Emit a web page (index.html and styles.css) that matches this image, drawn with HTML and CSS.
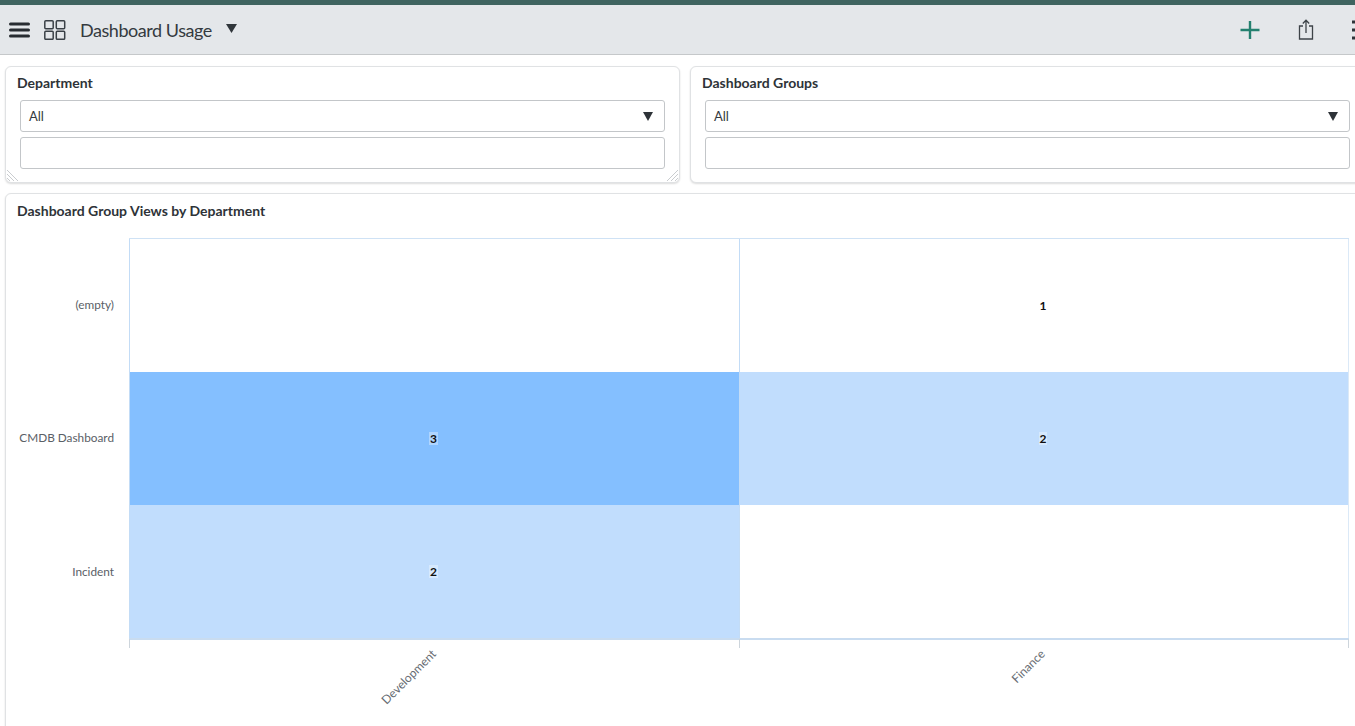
FILE: index.html
```html
<!DOCTYPE html>
<html lang="en">
<head>
<meta charset="utf-8">
<title>Dashboard Usage</title>
<link rel="stylesheet" href="styles.css">
</head>
<body>
<div class="page">
  <header class="topbar">
    <svg class="icon-menu" width="22" height="16" viewBox="0 0 22 16"><path d="M1.500 2h18M1.500 8h18M1.500 14h18" fill="none" stroke="#272c31" stroke-width="3" stroke-linecap="round"/></svg>
    <svg class="icon-grid" width="22" height="20" viewBox="0 0 22 20"><g fill="none" stroke="#3a4147" stroke-width="1.500"><rect x="0.800" y="0.800" width="8.400" height="8" rx="1"/><rect x="12.300" y="0.800" width="8.400" height="8" rx="1"/><rect x="0.800" y="11.300" width="8.400" height="8" rx="1"/><rect x="12.300" y="11.300" width="8.400" height="8" rx="1"/></g></svg>
    <h1 class="title">Dashboard Usage</h1>
    <svg class="icon-caret" width="11" height="9" viewBox="0 0 11 9"><path d="M0 0h11L5.500 9z" fill="#30363b"/></svg>
    <span class="spacer"></span>
    <svg class="icon-plus" width="20" height="20" viewBox="0 0 20 20"><path d="M10 1v18M0.500 10h19" fill="none" stroke="#23806f" stroke-width="2.400"/></svg>
    <svg class="icon-share" width="16" height="21" viewBox="0 0 16 21"><path d="M5 7H1.500v13h13V7H11M8 14V1.500M4.800 4.500 8 1.200l3.200 3.300" fill="none" stroke="#3d4348" stroke-width="1.300"/></svg>
    <svg class="icon-more" width="6" height="20" viewBox="0 0 6 20"><path d="M1 2h8M1 10h8M1 18h8" fill="none" stroke="#2e3338" stroke-width="3"/></svg>
  </header>

  <section class="filters">
    <div class="card filter">
      <h2 class="card-title">Department</h2>
      <div class="select"><span>All</span><svg width="10" height="9" viewBox="0 0 10 9"><path d="M0 0h10L5 9z" fill="#2e3338"/></svg></div>
      <div class="textbox"></div>
      <svg class="grip grip-left" width="12" height="12" viewBox="0 0 12 12"><path d="M0 1l11 11M0 5l7 7M0 9l3 3" stroke="#c9cccf" fill="none"/></svg>
      <svg class="grip grip-right" width="12" height="12" viewBox="0 0 12 12"><path d="M12 1 1 12M12 5l-7 7M12 9l-3 3" stroke="#c9cccf" fill="none"/></svg>
    </div>
    <div class="card filter">
      <h2 class="card-title">Dashboard Groups</h2>
      <div class="select"><span>All</span><svg width="10" height="9" viewBox="0 0 10 9"><path d="M0 0h10L5 9z" fill="#2e3338"/></svg></div>
      <div class="textbox"></div>
    </div>
  </section>

  <section class="card chart-card">
    <h2 class="card-title">Dashboard Group Views by Department</h2>
    <div class="chart">
      <div class="y-labels">
        <span>(empty)</span>
        <span>CMDB Dashboard</span>
        <span>Incident</span>
      </div>
      <div class="plot-wrap">
        <div class="plot">
          <div class="cell"></div>
          <div class="cell"><b>1</b></div>
          <div class="cell dark"><b>3</b></div>
          <div class="cell light"><b>2</b></div>
          <div class="cell light"><b>2</b></div>
          <div class="cell"></div>
        </div>
        <div class="x-axis">
          <div class="x-cell"><span>Development</span></div>
          <div class="x-cell"><span>Finance</span></div>
        </div>
      </div>
    </div>
  </section>
</div>
</body>
</html>
```
FILE: styles.css
```css
* { box-sizing: border-box; }
html, body { margin: 0; height: 100%; overflow: hidden; background: #fff; }
body { font-family: "Lato", "Open Sans", sans-serif; color: #2e3338; }
.page { width: 1375px; height: 726px; overflow: hidden; }

.topbar {
  height: 55px;
  border-top: 5px solid #3f6460;
  border-bottom: 1px solid #c5c8ca;
  background: #e4e7ea;
  display: flex;
  align-items: center;
  padding-left: 9px;
}
.icon-menu { margin-right: 13px; }
.icon-grid { margin-right: 14px; }
.title { width: 146px; margin: 0; font-size: 18px; font-weight: 400; letter-spacing: -0.45px; color: #343a40; line-height: 50px; white-space: nowrap; }
.icon-caret { position: relative; top: -1px; }
.spacer { flex: 1; }
.icon-plus { margin-right: 38px; }
.icon-share { margin-right: 37px; }
.icon-more { margin-right: 18px; }

.filters { display: flex; gap: 10px; padding: 11px 0 0 5px; }
.card {
  background: #fff;
  border: 1px solid #e0e2e4;
  border-radius: 6px;
  box-shadow: 0 1px 2px rgba(0,0,0,.14);
}
.filter { width: 675px; height: 117px; padding: 0 14px; position: relative; flex: none; }
.card-title { margin: 0 0 0 -3px; font-size: 14px; font-weight: 700; color: #2e3338; padding-top: 6px; line-height: 20px; }
.select, .textbox {
  height: 32px;
  border: 1px solid #c3c6c9;
  border-radius: 3px;
  background: #fff;
}
.select {
  margin-top: 7px;
  display: flex;
  align-items: center;
  justify-content: space-between;
  padding: 0 11px 0 8px;
  font-size: 13px;
  color: #343a40;
}
.textbox { margin-top: 5px; }
.grip { position: absolute; bottom: 1px; }
.grip-left { left: 1px; }
.grip-right { right: 1px; }

.chart-card { margin: 10px 0 0 5px; width: 1370px; height: 560px; padding: 0; }
.chart-card .card-title { margin-left: 0; padding: 7px 0 0 11px; }
.chart { display: flex; padding-top: 16px; }
.y-labels {
  width: 108px;
  height: 401px;
  display: grid;
  grid-template-rows: 134px 133px 134px;
  flex: none;
  font-size: 11.8px;
  color: #5a6066;
  text-align: right;
  align-items: center;
}
.plot-wrap { margin-left: 15px; width: 1220px; flex: none; }
.plot {
  display: grid;
  grid-template-columns: 610px 610px;
  grid-template-rows: 133px 133px 133px;
  border-top: 1px solid #cfe2f5;
  border-bottom: 2px solid #c9dcf0;
  margin-top: 1px;
  height: 402px;
  margin-bottom: -1px;
}
.cell {
  display: flex;
  align-items: center;
  justify-content: center;
  border-left: 1px solid #c3dcf6;
  font-size: 12px;
  color: #111;
  background: #fff;
}
.cell:nth-child(even) { border-right: 1px solid #dbe9f7; }
.cell b { font-weight: 700; background: rgba(255,255,255,.35); padding: 0 1px; line-height: 13px; position: relative; left: -1px; }
.cell.dark { background: #84bfff; }
.cell.light { background: #c1ddfd; }
.x-axis { display: grid; grid-template-columns: 610px 610px; height: 86px; }
.x-cell { position: relative; height: 9px; border-left: 1px solid #cdd5dc; }
.x-cell:last-child { border-right: 1px solid #cdd5dc; }
.x-cell span {
  position: absolute;
  right: 310px;
  top: 8px;
  font-size: 12px;
  line-height: 14px;
  color: #666c72;
  white-space: nowrap;
  transform: rotate(-45deg);
  transform-origin: right top;
}
```
